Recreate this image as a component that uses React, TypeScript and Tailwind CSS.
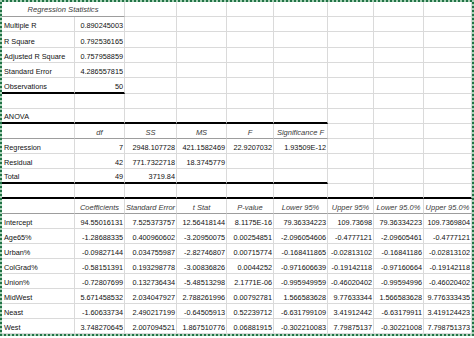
import React from "react";

// Excel regression output, pasted as a selection

type Line = "g" | "t" | "k";

interface Row {
	cells: string[];
	head?: boolean;
	lines: Line[];
	tall?: boolean;
}

const span = (n: number, l: Line): Line[] =>
	Array.from({ length: 9 }, (_, i) => (i < n ? l : "g"));

const data = (cells: string[], lines: Line[] = span(0, "g"), tall = false): Row => ({
	cells,
	lines,
	tall,
});

const rows: Row[] = [
	data(["Multiple R", "0.890245003"]),
	data(["R Square", "0.792536165"], span(0, "g"), true),
	data(["Adjusted R Square", "0.757958859"]),
	data(["Standard Error", "4.286557815"]),
	data(["Observations", "50"], span(2, "k"), true),
	data([]),
	data(["ANOVA"], span(6, "k")),
	{ cells: ["", "df", "SS", "MS", "F", "Significance F"], head: true, lines: span(6, "t") },
	data(["Regression", "7", "2948.107728", "421.1582469", "22.9207032", "1.93509E-12"]),
	data(["Residual", "42", "771.7322718", "18.3745779"]),
	data(["Total", "49", "3719.84"], span(6, "k")),
	data([], span(9, "k")),
	{
		cells: [
			"",
			"Coefficients",
			"Standard Error",
			"t Stat",
			"P-value",
			"Lower 95%",
			"Upper 95%",
			"Lower 95.0%",
			"Upper 95.0%",
		],
		head: true,
		lines: span(9, "t"),
	},
	data(["Intercept", "94.55016131", "7.525373757", "12.56418144", "8.1175E-16", "79.36334223", "109.73698", "79.36334223", "109.7369804"]),
	data(["Age65%", "-1.28688335", "0.400960602", "-3.20950075", "0.00254851", "-2.096054606", "-0.4777121", "-2.09605461", "-0.4777121"]),
	data(["Urban%", "-0.09827144", "0.034755987", "-2.82746807", "0.00715774", "-0.168411865", "-0.02813102", "-0.16841186", "-0.02813102"]),
	data(["ColGrad%", "-0.58151391", "0.193298778", "-3.00836826", "0.0044252", "-0.971606639", "-0.19142118", "-0.97160664", "-0.19142118"]),
	data(["Union%", "-0.72807699", "0.132736434", "-5.48513298", "2.1771E-06", "-0.995949959", "-0.46020402", "-0.99594996", "-0.46020402"]),
	data(["MidWest", "5.671458532", "2.034047927", "2.788261996", "0.00792781", "1.566583628", "9.77633344", "1.566583628", "9.776333435"]),
	data(["Neast", "-1.60633734", "2.490217199", "-0.64505913", "0.52239712", "-6.631799109", "3.41912442", "-6.63179911", "3.419124423"]),
	data(["West", "3.748270645", "2.007094521", "1.867510776", "0.06881915", "-0.302210083", "7.79875137", "-0.30221008", "7.798751373"]),
];

const bottom: Record<Line, string> = {
	g: "border-b border-b-[#dadada]",
	t: "border-b border-b-[#9d9d9d]",
	k: "border-b-2 border-b-black",
};

const gridCols =
	"grid grid-cols-[73px_50px_52px_50px_47px_54px_46px_50px_48px]";

const Cell = ({ text, col, head, line }: { text: string; col: number; head?: boolean; line: Line }) => {
	let align = "justify-end pr-[1px] text-[7.3px] text-[#111]";
	if (head) align = "justify-center italic text-[7.5px] text-[#3a3a3a]";
	else if (col === 0) align = "justify-start pl-[2px] text-[7.3px] text-[#111]";

	return (
		<div
			className={`flex items-end overflow-hidden whitespace-nowrap border-r border-r-[#dadada] pb-[2px] font-['Liberation_Sans',Arial,sans-serif] leading-none ${bottom[line]} ${align}`}
		>
			{text}
		</div>
	);
};

const App = () => {
	return (
		<div className="w-[474px] h-[338px] bg-white">
			<div className="w-[474px] p-[2px] bg-[repeating-conic-gradient(#217346_0_25%,#a9d1b6_0_50%)] bg-[length:4px_4px]">
				<div className="bg-white">
					{/* merged title row */}
					<div className={`${gridCols} h-[15px]`}>
						<div className="col-span-2 flex items-end justify-center pb-[2px] border-r border-r-[#dadada] border-b border-b-[#9d9d9d] italic font-['Liberation_Sans',Arial,sans-serif] text-[7.6px] leading-none text-[#3a3a3a]">
							Regression Statistics
						</div>
						{Array.from({ length: 7 }, (_, i) => (
							<Cell key={i} text="" col={i + 2} line="g" />
						))}
					</div>

					{rows.map((r, ri) => (
						<div key={ri} className={`${gridCols} ${r.tall ? "h-[16px]" : "h-[15px]"}`}>
							{Array.from({ length: 9 }, (_, ci) => (
								<Cell key={ci} text={r.cells[ci] ?? ""} col={ci} head={r.head} line={r.lines[ci]} />
							))}
						</div>
					))}
				</div>
			</div>
		</div>
	);
};

export default App;
